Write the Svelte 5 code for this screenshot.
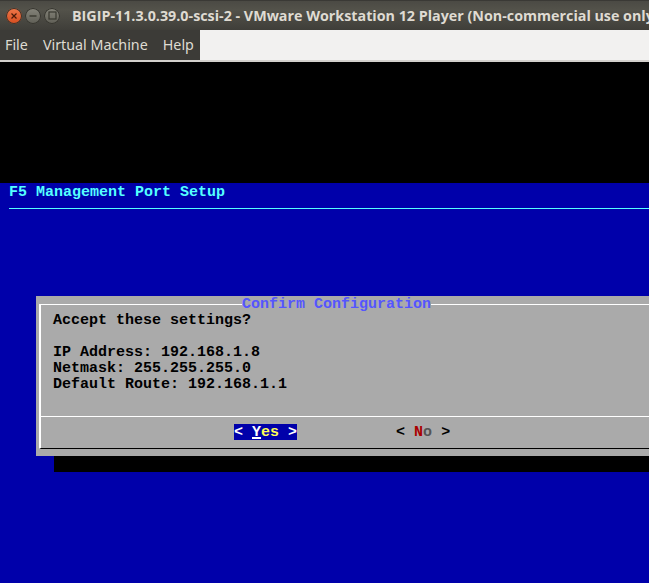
<script>
  // settings shown in the confirm dialog
  const settings = [
    "IP Address: 192.168.1.8",
    "Netmask: 255.255.255.0",
    "Default Route: 192.168.1.1",
  ];
  const menus = ["File", "Virtual Machine", "Help"];
</script>

<div class="window">
  <header class="titlebar">
    <div class="controls">
      <span class="ctl close">
        <svg width="8" height="8" viewBox="0 0 8 8"><path d="M1.5 1.5l5 5M6.5 1.5l-5 5" stroke="#4a1a08" stroke-width="1.2" fill="none" /></svg>
      </span>
      <span class="ctl">
        <svg width="8" height="8" viewBox="0 0 8 8"><path d="M0.5 4h7" stroke="#38372f" stroke-width="1.4" fill="none" /></svg>
      </span>
      <span class="ctl">
        <svg width="9" height="9" viewBox="0 0 9 9"><rect x="1" y="1" width="7" height="7" stroke="#38372f" stroke-width="1.2" fill="none" /></svg>
      </span>
    </div>
    <span class="wintitle">BIGIP-11.3.0.39.0-scsi-2 - VMware Workstation 12 Player (Non-commercial use only)</span>
  </header>

  <nav class="toolbar">
    <ul class="menu">
      {#each menus as m}
        <li>{m}</li>
      {/each}
    </ul>
  </nav>

  <div class="guest">
    <div class="blackband"></div>
    <div class="console">
      <div class="heading">F5 Management Port Setup</div>
      <div class="rule"></div>

      <div class="dialog">
        <div class="frame">
          <span class="legend">Confirm Configuration</span>
          <div class="body">
            <div class="line black">Accept these settings?</div>
            <div class="line"></div>
            {#each settings as s}
              <div class="line black">{s}</div>
            {/each}
          </div>
          <div class="buttons">
            <span class="btn active">&lt; <b class="hot">Y</b><span class="yes">es</span> &gt;</span>
            <span class="btn"><span class="black">&lt;</span> <b class="red">N</b><span class="grey">o</span>  <span class="black">&gt;</span></span>
          </div>
        </div>
      </div>
      <div class="shadow"></div>
    </div>
  </div>
</div>

<style>
  :global(body) {
    margin: 0;
    background: #0000aa;
  }

  .window {
    width: 649px;
    height: 583px;
    overflow: hidden;
    display: flex;
    flex-direction: column;
  }

  .titlebar {
    height: 30px;
    box-sizing: border-box;
    flex: none;
    display: flex;
    align-items: center;
    background: linear-gradient(#4b4a44, #53524a 30%, #3f3e39);
    border-top: 1px solid #3a3935;
    overflow: hidden;
  }

  .controls {
    display: flex;
    gap: 3px;
    margin-left: 6px;
    width: 66px;
    flex: none;
  }

  .ctl {
    width: 16px;
    height: 16px;
    border-radius: 50%;
    display: flex;
    align-items: center;
    justify-content: center;
    background: linear-gradient(#86857b, #5f5e55);
    box-shadow: inset 0 0 0 1px #35342e;
  }

  .ctl.close {
    background: linear-gradient(#f0784a, #d64d1f);
  }

  .wintitle {
    font: bold 14.3px "Open Sans", "Noto Sans", sans-serif;
    color: #dfdbd2;
    white-space: nowrap;
  }

  .toolbar {
    height: 30px;
    flex: none;
    background: #f2f1f0;
  }

  .menu {
    list-style: none;
    margin: 0;
    padding: 0 0 2px 5px;
    width: 200px;
    height: 30px;
    box-sizing: border-box;
    display: flex;
    gap: 15px;
    align-items: center;
    background: #3c3b37;
    color: #dfdbd2;
    font: 14.3px "Noto Sans", "Open Sans", sans-serif;
    white-space: nowrap;
  }

  .guest {
    flex: 1;
    display: flex;
    flex-direction: column;
    border-top: 2px solid #d3d0cc;
  }

  .blackband {
    height: 121px;
    background: #000;
    flex: none;
  }

  .console {
    flex: 1;
    background: #0000aa;
    font: bold 15px/18px "Liberation Mono", "DejaVu Sans Mono", monospace;
  }

  .heading {
    color: #55ffff;
    padding-left: 9px;
    height: 16px;
    line-height: 19px;
  }

  .rule {
    height: 1px;
    background: #55ffff;
    margin: 9px 0 0 9px;
  }

  .dialog {
    margin: 87px 0 0 36px;
    height: 160px;
    box-sizing: border-box;
    background: #aaaaaa;
    padding: 8px 0 7px 3px;
  }

  .frame {
    position: relative;
    height: 100%;
    box-sizing: border-box;
    border-top: 1px solid #fff;
    border-left: 2px solid #fff;
    border-bottom: 1px solid #000;
    display: flex;
    flex-direction: column;
  }

  .legend {
    position: absolute;
    top: -9px;
    left: 201px;
    height: 16px;
    background: #aaaaaa;
    color: #5555ff;
  }

  .body {
    height: 112px;
    box-sizing: border-box;
    padding: 7px 0 0 12px;
    border-bottom: 1px solid #fff;
    flex: none;
  }

  .line {
    height: 16px;
    white-space: pre;
  }

  .black {
    color: #000;
  }

  .buttons {
    display: flex;
    padding: 7px 0 0 193px;
    gap: 99px;
  }

  .btn {
    height: 16px;
    white-space: pre;
  }

  .active {
    background: #0000aa;
    color: #fff;
  }

  .hot {
    color: #fff;
    text-decoration: underline;
    text-decoration-thickness: 2px;
    text-underline-offset: 1px;
  }

  .yes {
    color: #ffff55;
  }

  .red {
    color: #aa0000;
  }

  .grey {
    color: #555555;
  }

  .shadow {
    height: 16px;
    margin-left: 54px;
    background: #000;
  }
</style>
